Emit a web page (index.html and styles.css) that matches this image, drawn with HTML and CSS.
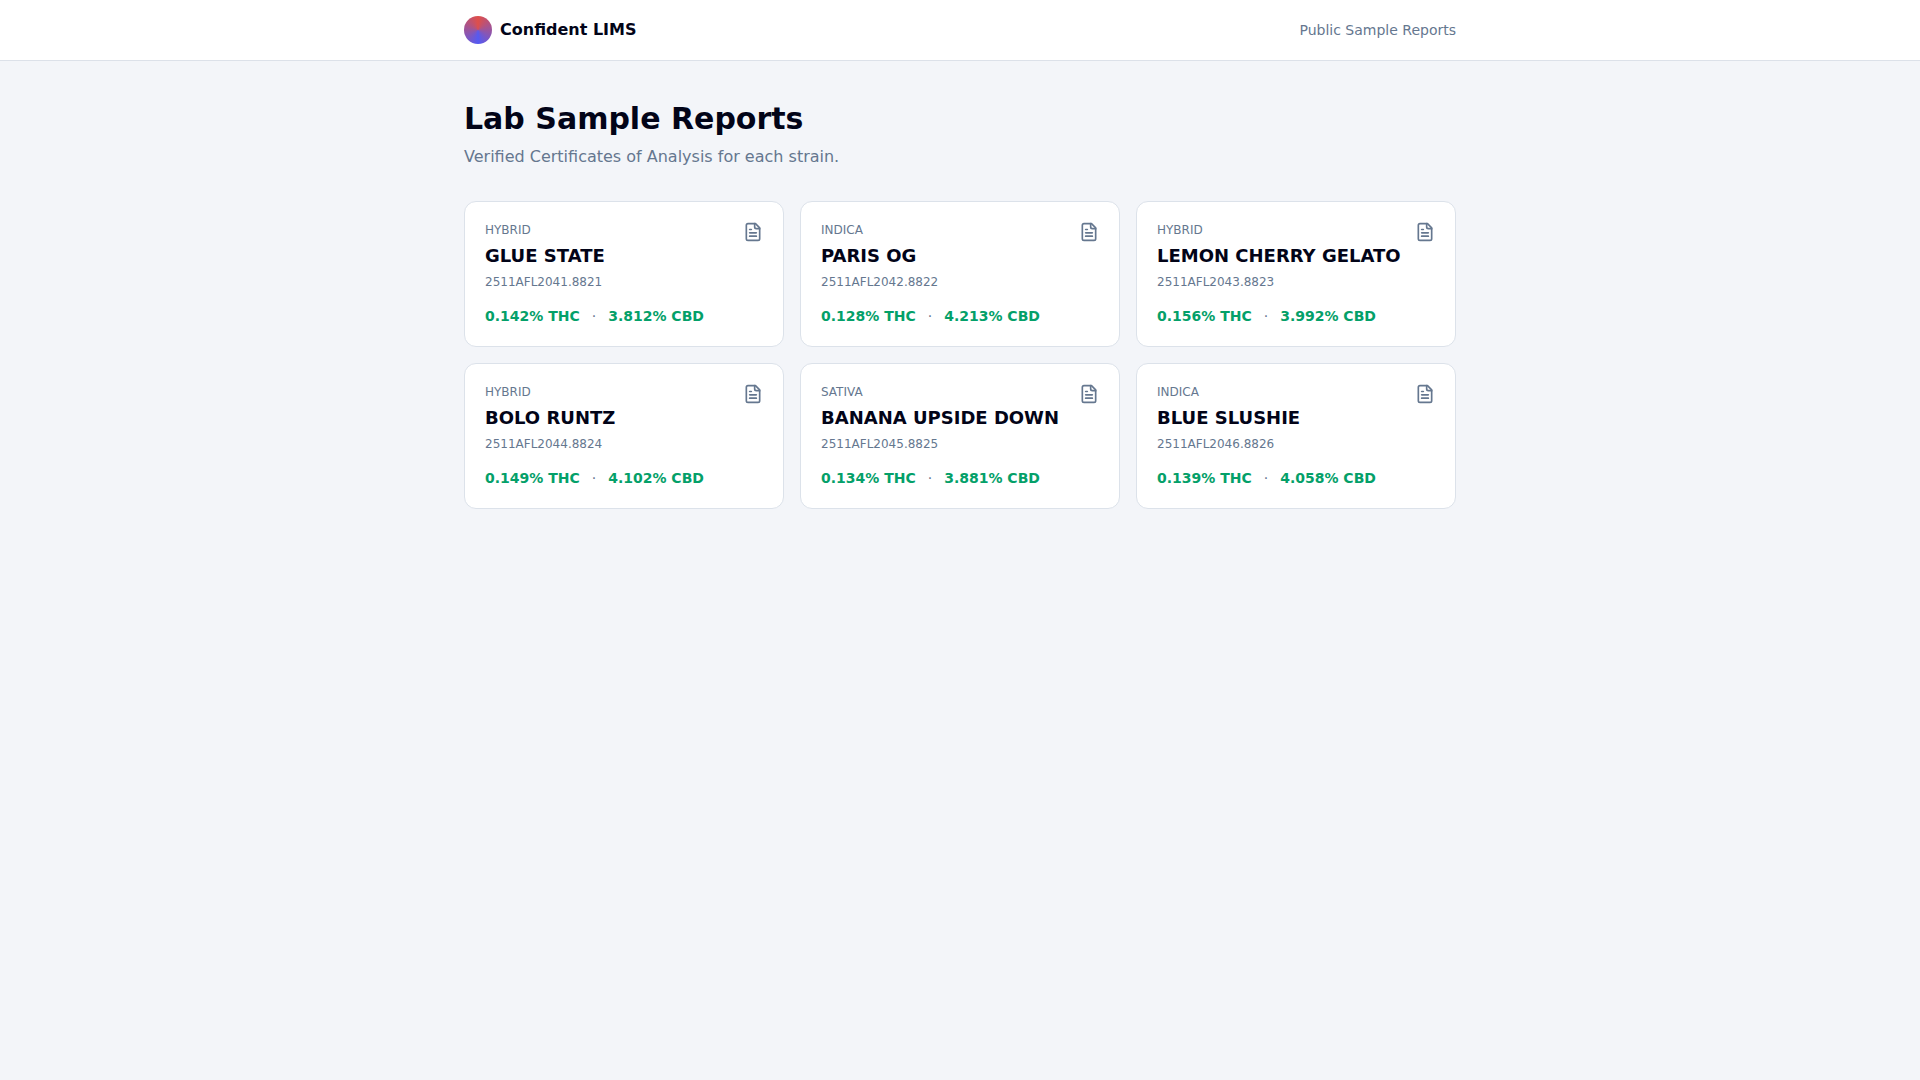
FILE: index.html
```html
<!DOCTYPE html>
<html lang="en">
<head>
  <meta charset="utf-8">
  <meta name="viewport" content="width=device-width, initial-scale=1">
  <title>Confident LIMS</title>
  <link rel="stylesheet" href="styles.css">
</head>
<body>
  <svg class="sprite" aria-hidden="true">
    <symbol id="file-text" viewBox="0 0 24 24">
      <path d="M15 2H6a2 2 0 0 0-2 2v16a2 2 0 0 0 2 2h12a2 2 0 0 0 2-2V7Z"/>
      <path d="M14 2v4a2 2 0 0 0 2 2h4"/>
      <path d="M10 9H8"/>
      <path d="M16 13H8"/>
      <path d="M16 17H8"/>
    </symbol>
  </svg>
  <header class="site-header">
    <div class="container header-inner">
      <a class="brand" href="#"><span class="brand-mark"></span>Confident LIMS</a>
      <span class="header-note">Public Sample Reports</span>
    </div>
  </header>
  <main class="container main">
    <h1 class="title">Lab Sample Reports</h1>
    <p class="subtitle">Verified Certificates of Analysis for each strain.</p>
    <div class="grid">
      <a class="card" href="#">
        <div class="card-top">
          <div>
            <p class="meta">HYBRID</p>
            <h2 class="name">GLUE STATE</h2>
            <p class="meta">2511AFL2041.8821</p>
          </div>
          <svg class="icon" aria-hidden="true"><use href="#file-text"/></svg>
        </div>
        <div class="levels"><span class="level">0.142% THC</span><span class="dot">·</span><span class="level">3.812% CBD</span></div>
      </a>
      <a class="card" href="#">
        <div class="card-top">
          <div>
            <p class="meta">INDICA</p>
            <h2 class="name">PARIS OG</h2>
            <p class="meta">2511AFL2042.8822</p>
          </div>
          <svg class="icon" aria-hidden="true"><use href="#file-text"/></svg>
        </div>
        <div class="levels"><span class="level">0.128% THC</span><span class="dot">·</span><span class="level">4.213% CBD</span></div>
      </a>
      <a class="card" href="#">
        <div class="card-top">
          <div>
            <p class="meta">HYBRID</p>
            <h2 class="name">LEMON CHERRY GELATO</h2>
            <p class="meta">2511AFL2043.8823</p>
          </div>
          <svg class="icon" aria-hidden="true"><use href="#file-text"/></svg>
        </div>
        <div class="levels"><span class="level">0.156% THC</span><span class="dot">·</span><span class="level">3.992% CBD</span></div>
      </a>
      <a class="card" href="#">
        <div class="card-top">
          <div>
            <p class="meta">HYBRID</p>
            <h2 class="name">BOLO RUNTZ</h2>
            <p class="meta">2511AFL2044.8824</p>
          </div>
          <svg class="icon" aria-hidden="true"><use href="#file-text"/></svg>
        </div>
        <div class="levels"><span class="level">0.149% THC</span><span class="dot">·</span><span class="level">4.102% CBD</span></div>
      </a>
      <a class="card" href="#">
        <div class="card-top">
          <div>
            <p class="meta">SATIVA</p>
            <h2 class="name">BANANA UPSIDE DOWN</h2>
            <p class="meta">2511AFL2045.8825</p>
          </div>
          <svg class="icon" aria-hidden="true"><use href="#file-text"/></svg>
        </div>
        <div class="levels"><span class="level">0.134% THC</span><span class="dot">·</span><span class="level">3.881% CBD</span></div>
      </a>
      <a class="card" href="#">
        <div class="card-top">
          <div>
            <p class="meta">INDICA</p>
            <h2 class="name">BLUE SLUSHIE</h2>
            <p class="meta">2511AFL2046.8826</p>
          </div>
          <svg class="icon" aria-hidden="true"><use href="#file-text"/></svg>
        </div>
        <div class="levels"><span class="level">0.139% THC</span><span class="dot">·</span><span class="level">4.058% CBD</span></div>
      </a>
    </div>
  </main>
</body>
</html>
```

FILE: styles.css
```css
* {
  box-sizing: border-box;
  margin: 0;
}

body {
  background: #f3f5f9;
  color: #020418;
  font-family: "DejaVu Sans", sans-serif;
  font-size: 16px;
  line-height: 24px;
}

a {
  color: inherit;
  text-decoration: none;
}

.sprite {
  display: none;
}

.container {
  max-width: 1024px;
  margin: 0 auto;
  padding: 0 16px;
}

.site-header {
  background: #fff;
  border-bottom: 1px solid #dce1e9;
}

.header-inner {
  display: flex;
  align-items: center;
  justify-content: space-between;
  padding: 16px;
}

.brand {
  display: flex;
  align-items: center;
  gap: 8px;
  height: 28px;
  font-weight: 600;
}

.brand-mark {
  width: 28px;
  height: 28px;
  border-radius: 50%;
  background: conic-gradient(#df4f4a, #555af2, #df4f4a);
}

.header-note {
  color: #65778f;
  font-size: 14px;
  line-height: 20px;
}

.main {
  padding: 40px 16px;
}

.title {
  font-size: 30px;
  line-height: 36px;
  font-weight: 700;
}

.subtitle {
  margin-top: 8px;
  color: #65778f;
}

.grid {
  display: grid;
  grid-template-columns: repeat(auto-fill, minmax(300px, 1fr));
  gap: 16px;
  margin-top: 32px;
}

.card {
  background: #fff;
  border: 1px solid #dce2ea;
  border-radius: 12px;
  padding: 20px;
}

.card-top {
  display: flex;
  align-items: flex-start;
  justify-content: space-between;
}

.meta {
  color: #65778f;
  font-size: 12px;
  line-height: 16px;
}

.name {
  margin: 4px 0;
  font-size: 18px;
  line-height: 28px;
  font-weight: 600;
}

.icon {
  flex: none;
  width: 20px;
  height: 20px;
  fill: none;
  stroke: #65778f;
  stroke-width: 2;
  stroke-linecap: round;
  stroke-linejoin: round;
}

.levels {
  display: flex;
  gap: 12px;
  margin-top: 16px;
  font-size: 14px;
  line-height: 20px;
}

.level {
  color: #04a069;
  font-weight: 600;
}

.dot {
  color: #65778f;
}
```
